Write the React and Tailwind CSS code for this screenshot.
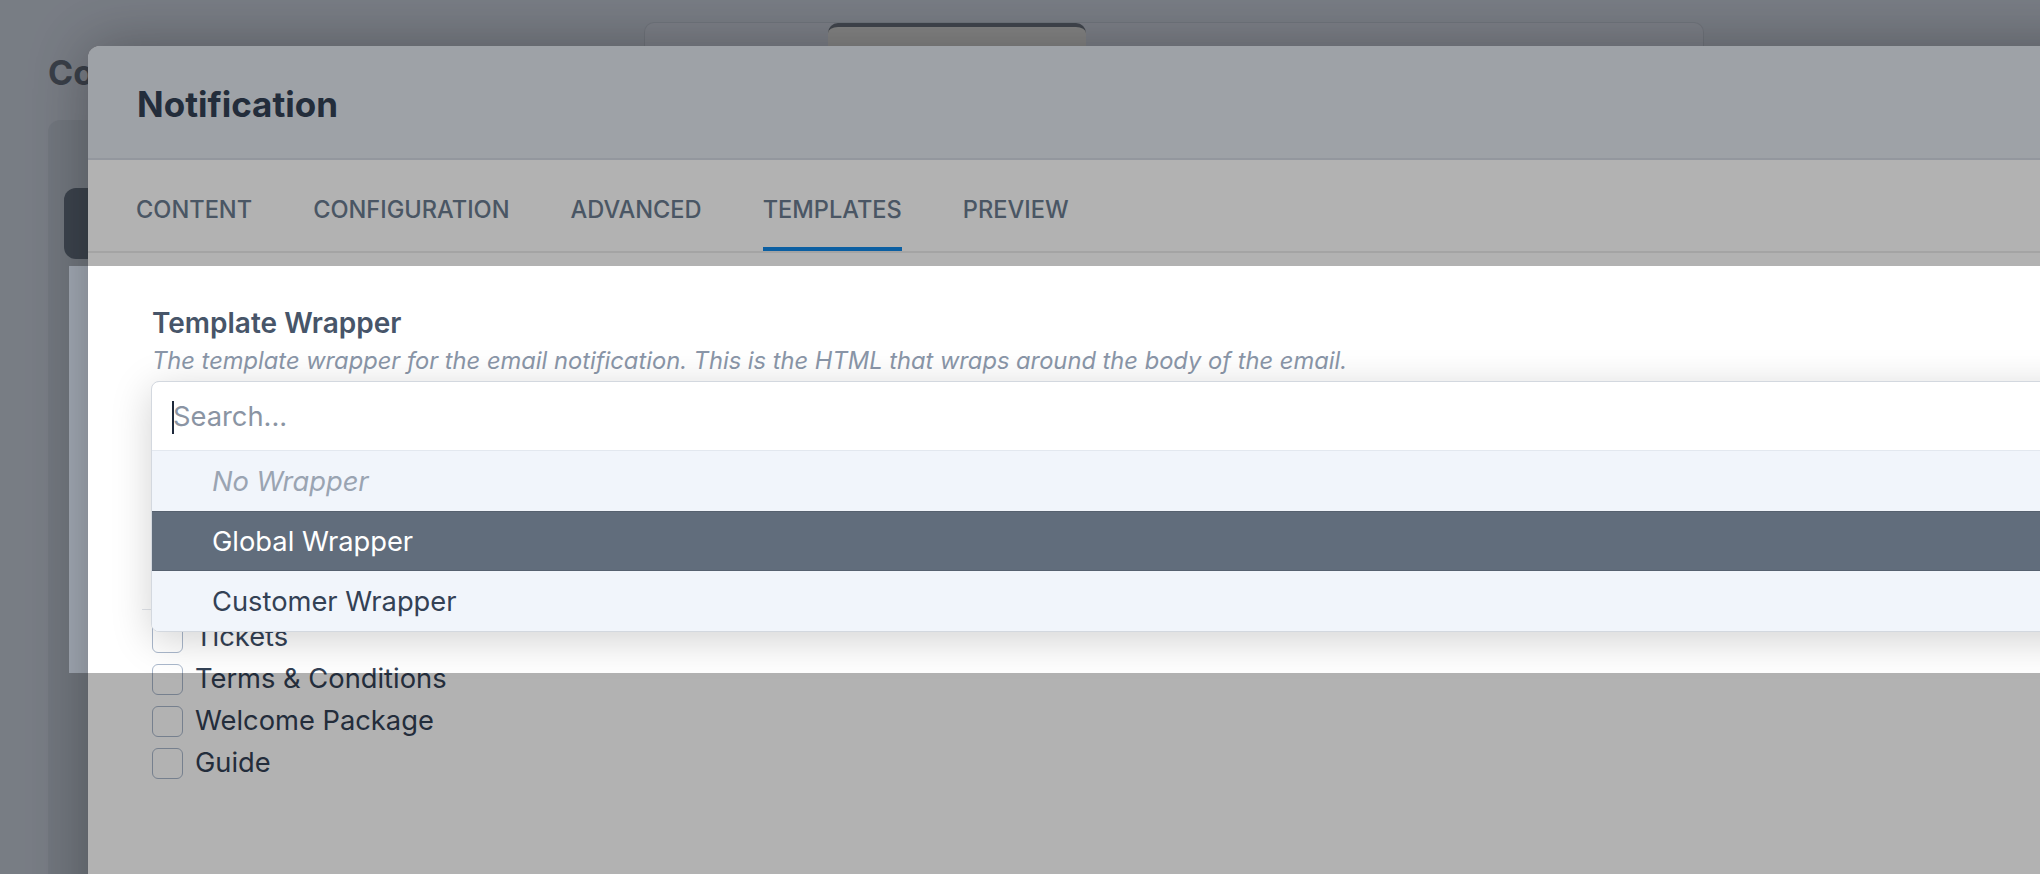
import { useState } from "react";

const tabs = ["Content", "Configuration", "Advanced", "Templates", "Preview"];

const wrappers = [
   { id: "none", label: "No Wrapper", muted: true },
   { id: "global", label: "Global Wrapper" },
   { id: "customer", label: "Customer Wrapper" },
];

const attachments = ["Tickets", "Terms & Conditions", "Welcome Package", "Guide"];

const App = () => {
   const [activeTab] = useState("Templates");
   const [selected] = useState("global");

   return (
      <div className="relative w-[2040px] h-[874px] overflow-hidden bg-[#adb3be] font-[Inter,'Noto_Sans',sans-serif]">
         {/* page behind the modal */}
         <div className="px-[48px]">
            <div className="flex items-start">
               <div className="mt-[53px] w-[596px]">
                  <h1 className="w-[40px] overflow-hidden text-[34px] leading-[40px] font-bold text-[#535b68] whitespace-nowrap">
                     Communications
                  </h1>
               </div>
               <div className="mt-[22px] flex h-[48px] rounded-t-[10px] border border-b-0 border-[#a1a7b2] bg-[#b2b7c2]">
                  <div className="w-[183px]" />
                  <div className="w-[258px] rounded-t-[10px] border-t-4 border-[#5d646f] bg-[#bebebe]" />
                  <div className="w-[617px]" />
               </div>
            </div>
            <div className="mt-[27px] h-[800px] rounded-[12px] bg-[#a3aab5] pt-[68px] px-[16px]">
               <div className="h-[71px] w-[300px] rounded-[12px] bg-[#57616f]" />
            </div>
         </div>

         {/* modal */}
         <div className="absolute left-[88px] top-[46px] w-[2100px] h-[900px] rounded-[12px] bg-white overflow-hidden shadow-[0_0_60px_rgba(0,0,0,0.3)]">
            <div className="h-[114px] flex items-center pt-[5px] px-[49px] bg-[#e2e8f0] border-b-2 border-[#d3d9e2]">
               <h2 className="text-[35px] font-bold text-[#334155]">Notification</h2>
            </div>
            <div className="h-[93px] flex gap-[61px] px-[48px] border-b-2 border-[#ebebeb]">
               {tabs.map((tab) => (
                  <div
                     key={tab}
                     className={`h-full flex items-center border-b-4 pt-[12px] text-[23.6px] font-medium uppercase text-[#6b7c90] ${
                        tab === activeTab ? "border-[#1089e8]" : "border-transparent"
                     }`}>
                     {tab}
                  </div>
               ))}
            </div>

            <div className="relative pt-[53px] pl-[64px]">
               <label className="block text-[28px] leading-[34px] font-semibold text-[#475569]">
                  Template Wrapper
               </label>
               <p className="mt-[6px] text-[23.7px] leading-[30px] italic text-[#8a96a8]">
                  The template wrapper for the email notification. This is the HTML that wraps around the body of the email.
               </p>
               <div className="mt-[5px] h-[60px] w-[1900px] rounded-[8px] border border-[#d6dbe2]" />

               {/* attachments list, partly under the open dropdown */}
               <div className="mt-[168px] -ml-[10px] h-px w-[1900px] bg-[#e2e5ea]" />
               <div className="mt-[12px] flex flex-col gap-[11px]">
                  {attachments.map((item) => (
                     <label key={item} className="flex h-[31px] items-center gap-[12px] text-[27.3px] text-[#334155]">
                        <span className="h-[31px] w-[31px] rounded-[6px] border-[1.5px] border-[#aab8cc] bg-white" />
                        {item}
                     </label>
                  ))}
               </div>

               {/* open select dropdown */}
               <div className="absolute left-[63px] top-[128px] w-[1950px] rounded-[8px] border border-[#d3d8df] bg-white overflow-hidden shadow-[0_8px_40px_rgba(0,0,0,0.18)]">
                  <div className="h-[69px] flex items-center pl-[20px] pt-[2px] border-b border-[#e3e8ef]">
                     <span className="h-[33px] w-[2px] bg-[#1e293b]" />
                     <span className="-ml-[1px] text-[27.3px] text-[#8a94a3]">Search...</span>
                  </div>
                  {wrappers.map((w) => (
                     <div
                        key={w.id}
                        className={`h-[60px] flex items-center pl-[60px] pt-[3px] text-[27.3px] ${
                           w.id === selected
                              ? "bg-[#616d7c] text-white border-y border-[#56616f]"
                              : w.muted
                                ? "bg-[#f1f5fb] italic text-[#9aa4b2]"
                                : "bg-[#f1f5fb] text-[#334155]"
                        }`}>
                        {w.label}
                     </div>
                  ))}
               </div>
            </div>
         </div>

         {/* tour highlight over the modal body */}
         <div className="pointer-events-none absolute left-[69px] top-[266px] w-[2100px] h-[407px] shadow-[0_0_0_4000px_rgba(0,0,0,0.3)]" />
      </div>
   );
};

export default App;
